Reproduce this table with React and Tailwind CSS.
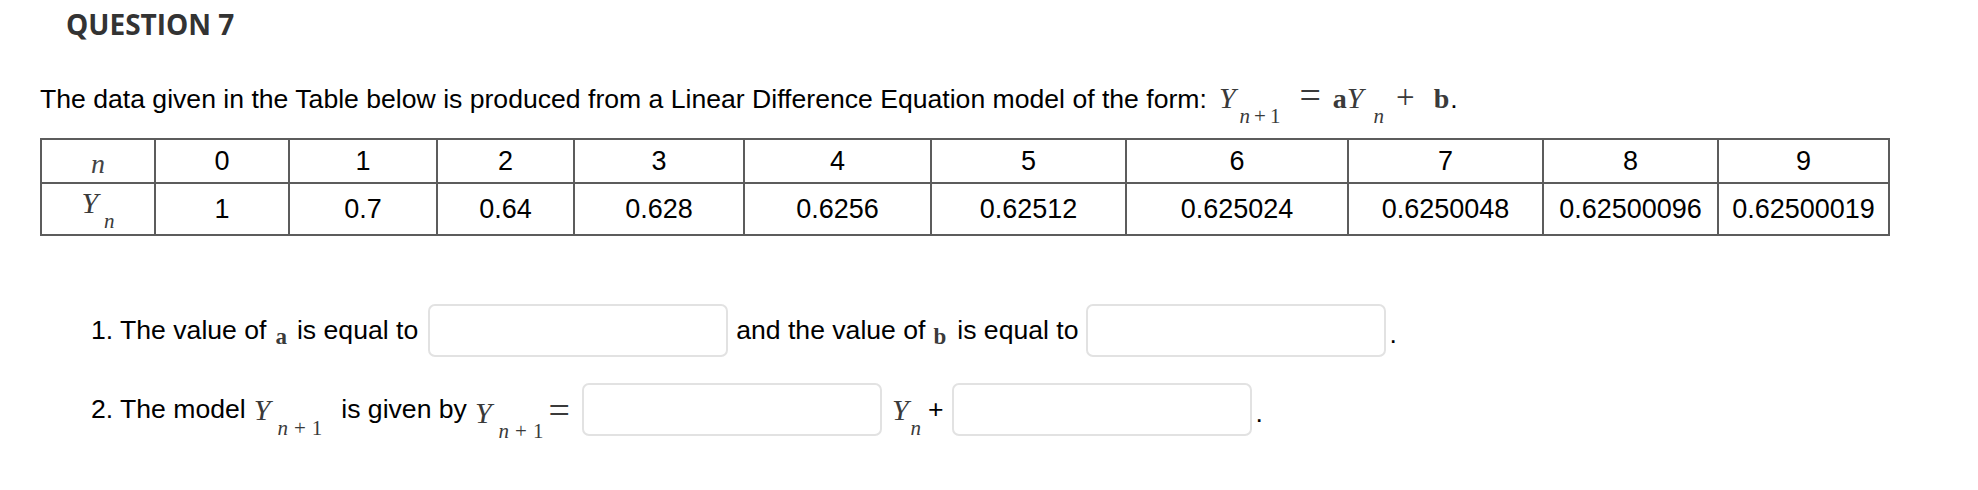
import React from "react";

const cols = [114, 134, 148, 137, 170, 187, 195, 222, 195, 175, 171];
const head = ["0", "1", "2", "3", "4", "5", "6", "7", "8", "9"];
const vals = ["1", "0.7", "0.64", "0.628", "0.6256", "0.62512", "0.625024", "0.6250048", "0.62500096", "0.62500019"];

function Box() {
  return <div className="w-[300px] h-[53px] border-2 border-[#e2e2e2] rounded-[7px] bg-white shrink-0" />;
}

function NPlus1({ top = "top-[15px]", gap = "ml-[5px]", space = "mx-[4px]" }) {
  return (
    <span className={`inline-flex items-baseline leading-none ${gap} relative ${top}`}>
      <span className="text-[21px] italic">n</span>
      <span className={`text-[21px] ${space}`}>+</span>
      <span className="text-[21px]">1</span>
    </span>
  );
}

export default function App() {
  return (
    <div className="w-[1978px] h-[490px] bg-white text-black font-['Liberation_Sans',Arial,sans-serif]">
      <div className="pl-[66px] pt-[6px] font-['Open_Sans',sans-serif] font-bold text-[28px] text-[#333] leading-[36px]">
        QUESTION 7
      </div>

      <div className="pl-[40px] mt-[34px] flex items-baseline text-[26.6px] leading-[34px]">
        <span>The data given in the Table below is produced from a Linear Difference Equation model of the form:</span>
        <span className="ml-[12px] inline-flex items-baseline leading-none font-['Liberation_Serif',serif] text-[#3a3a3a]">
          <span className="text-[30px] italic">Y</span>
          <NPlus1 top="top-[15px]" gap="ml-[4px]" />
          <span className="text-[38px] ml-[19px]">=</span>
          <span className="text-[28px] font-bold ml-[12px]">a</span>
          <span className="text-[30px] italic">Y</span>
          <span className="text-[21px] italic relative top-[15px] ml-[10px]">n</span>
          <span className="text-[33px] ml-[12px]">+</span>
          <span className="text-[28px] font-bold ml-[19px]">b</span>
        </span>
        <span className="ml-[1px]">.</span>
      </div>

      <div className="pl-[40px] mt-[22px]">
        <table className="border-collapse table-fixed text-[27px] leading-none">
          <colgroup>
            {cols.map((w, i) => (
              <col key={i} style={{ width: w }} />
            ))}
          </colgroup>
          <tbody>
            <tr>
              <td className="h-[44px] border-2 border-[#5c5c5c] text-center p-0">
                <span className="font-['Liberation_Serif',serif] italic text-[28px] text-[#444] relative top-[3px]">n</span>
              </td>
              {head.map((h) => (
                <td key={h} className="h-[44px] border-2 border-[#5c5c5c] text-center p-0">
                  {h}
                </td>
              ))}
            </tr>
            <tr>
              <td className="h-[52px] border-2 border-[#5c5c5c] text-center p-0">
                <span className="inline-flex items-baseline leading-none font-['Liberation_Serif',serif] italic text-[#3a3a3a] relative -top-[6px]">
                  <span className="text-[30px]">Y</span>
                  <span className="text-[21px] relative top-[15px] ml-[6px]">n</span>
                </span>
              </td>
              {vals.map((v) => (
                <td key={v} className="h-[52px] border-2 border-[#5c5c5c] text-center p-0">
                  {v}
                </td>
              ))}
            </tr>
          </tbody>
        </table>
      </div>

      <div className="pl-[91px] mt-[68px] h-[53px] flex items-center text-[26.6px] leading-none">
        <span>1. The value of</span>
        <span className="font-['Liberation_Serif',serif] font-bold text-[23px] text-[#3a3a3a] ml-[9px] relative top-[6px]">a</span>
        <span className="ml-[10px]">is equal to</span>
        <div className="ml-[10px]">
          <Box />
        </div>
        <span className="ml-[8px]">and the value of</span>
        <span className="font-['Liberation_Serif',serif] font-bold text-[23px] text-[#3a3a3a] ml-[8px] relative top-[6px]">b</span>
        <span className="ml-[11px]">is equal to</span>
        <div className="ml-[8px]">
          <Box />
        </div>
        <span className="ml-[3px] relative top-[4px]">.</span>
      </div>

      <div className="pl-[91px] mt-[26px] h-[53px] flex items-center text-[26.6px] leading-none">
        <span>2. The model</span>
        <span className="ml-[8px] inline-flex items-baseline leading-none font-['Liberation_Serif',serif] text-[#3a3a3a]">
          <span className="text-[30px] italic">Y</span>
          <NPlus1 top="top-[15px]" gap="ml-[7px]" space="mx-[6px]" />
        </span>
        <span className="ml-[19px]">is given by</span>
        <span className="ml-[8px] inline-flex items-baseline leading-none font-['Liberation_Serif',serif] text-[#3a3a3a]">
          <span className="text-[30px] italic">Y</span>
          <NPlus1 top="top-[15px]" gap="ml-[7px]" space="mx-[6px]" />
          <span className="text-[38px] ml-[5px]">=</span>
        </span>
        <div className="ml-[12px]">
          <Box />
        </div>
        <span className="ml-[10px] inline-flex items-baseline leading-none font-['Liberation_Serif',serif] text-[#3a3a3a]">
          <span className="text-[30px] italic">Y</span>
          <span className="text-[21px] italic relative top-[15px] ml-[2px]">n</span>
        </span>
        <span className="ml-[7px]">+</span>
        <div className="ml-[8px]">
          <Box />
        </div>
        <span className="ml-[4px] relative top-[4px]">.</span>
      </div>
    </div>
  );
}
